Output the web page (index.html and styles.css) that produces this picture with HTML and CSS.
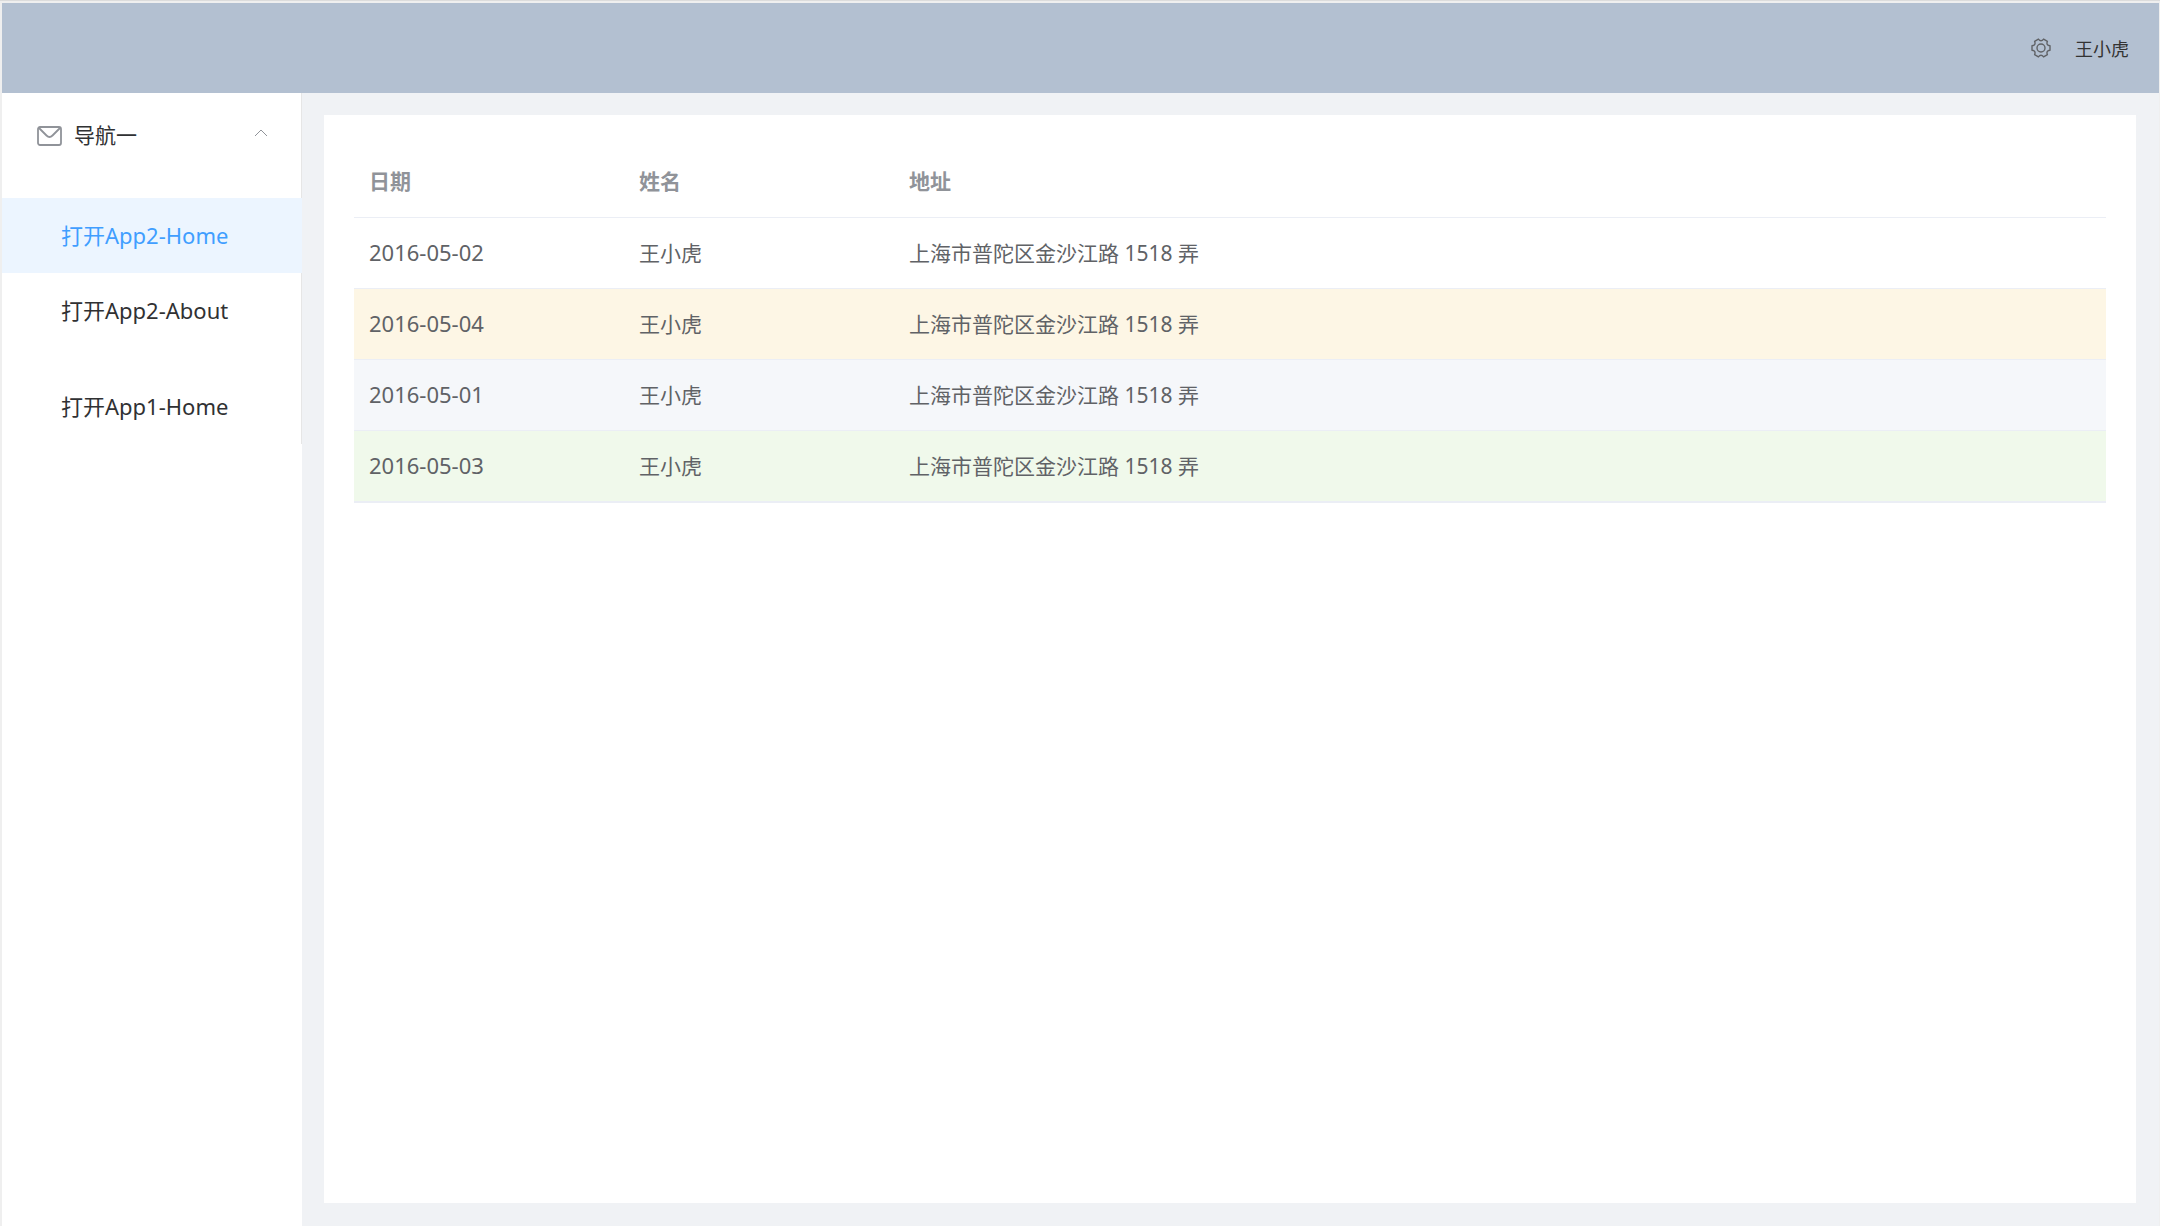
FILE: index.html
```html
<!DOCTYPE html>
<html lang="zh-CN">
<head>
    <meta charset="UTF-8">
    <meta name="viewport" content="width=device-width, initial-scale=1.0">
    <title>App1</title>
    <link rel="stylesheet" href="styles.css">
</head>
<body>
    <header class="header">
        <button type="button" class="setting" aria-label="设置">
            <svg class="icon-setting" viewBox="0 0 20 20">
                <path d="M19 7.8 V12.2 Q14.8 12.7 16.4 16.7 L12.6 18.9 Q10 15.5 7.400 18.900 L3.600 16.700 Q5.200 12.700 1 12.200 V7.800 Q5.200 7.300 3.600 3.300 L7.400 1.100 Q10 4.500 12.600 1.100 L16.400 3.300 Q14.800 7.300 19 7.800 Z"/>
                <circle cx="10" cy="10" r="4"/>
            </svg>
        </button>
        <span class="username">王小虎</span>
    </header>
    <div class="container">
        <aside class="aside">
            <nav class="menu">
                <button type="button" class="submenu-title" aria-expanded="true">
                    <svg class="icon-message" viewBox="0 0 26 20">
                        <rect x="2" y="1" width="23" height="18" rx="2"/>
                        <path d="M3 2 L10.500 9.500 Q13.500 12.500 16.500 9.500 L24 2"/>
                    </svg>
                    <span>导航一</span>
                    <svg class="icon-arrow" viewBox="0 0 14 8">
                        <path d="M1 7 L7 1 L13 7"/>
                    </svg>
                </button>
                <ul class="menu-group">
                    <li><a href="#/app2/home" class="menu-item active">打开App2-Home</a></li>
                    <li><a href="#/app2/about" class="menu-item">打开App2-About</a></li>
                </ul>
                <ul class="menu-group">
                    <li><a href="#/app1/home" class="menu-item">打开App1-Home</a></li>
                </ul>
            </nav>
        </aside>
        <main class="main">
            <div class="content">
                <table class="table">
                    <colgroup>
                        <col class="col-date">
                        <col class="col-name">
                        <col>
                    </colgroup>
                    <thead>
                        <tr>
                            <th>日期</th>
                            <th>姓名</th>
                            <th>地址</th>
                        </tr>
                    </thead>
                    <tbody>
                        <tr>
                            <td class="date">2016-05-02</td>
                            <td>王小虎</td>
                            <td>上海市普陀区金沙江路 1518 弄</td>
                        </tr>
                        <tr class="warning-row">
                            <td class="date">2016-05-04</td>
                            <td>王小虎</td>
                            <td>上海市普陀区金沙江路 1518 弄</td>
                        </tr>
                        <tr class="hover-row">
                            <td class="date">2016-05-01</td>
                            <td>王小虎</td>
                            <td>上海市普陀区金沙江路 1518 弄</td>
                        </tr>
                        <tr class="success-row">
                            <td class="date">2016-05-03</td>
                            <td>王小虎</td>
                            <td>上海市普陀区金沙江路 1518 弄</td>
                        </tr>
                    </tbody>
                </table>
            </div>
        </main>
    </div>
</body>
</html>
```
FILE: styles.css
```css
* {
    box-sizing: border-box;
}

body {
    display: flex;
    flex-direction: column;
    min-height: 100vh;
    margin: 0;
    border-top: 1px solid #dcdcdc;
    padding: 2px 1px 0 2px;
    background-color: #efefef;
    color: #303133;
    font-family: "Noto Sans", "Noto Sans CJK SC", sans-serif;
    font-size: 21px;
}

button {
    border: none;
    padding: 0;
    background: none;
    color: inherit;
    font: inherit;
    cursor: pointer;
}

svg {
    display: block;
    fill: none;
    stroke: #909399;
}

.header {
    display: flex;
    align-items: center;
    justify-content: flex-end;
    gap: 24px;
    height: 90px;
    padding: 0 30px;
    background-color: #b3c0d1;
    color: #333;
    font-size: 18px;
}

.icon-setting {
    width: 20px;
    height: 20px;
    stroke: #606266;
    stroke-width: 1.4;
    stroke-linejoin: round;
}

.container {
    display: flex;
    flex: 1;
}

.aside {
    width: 300px;
    flex-shrink: 0;
    background-color: #fff;
}

.menu {
    border-right: 1px solid #e6e6e6;
}

.submenu-title {
    display: flex;
    align-items: center;
    width: 100%;
    height: 84px;
    padding: 0 33px 2px 34px;
}

.icon-message {
    width: 26px;
    height: 20px;
    margin-top: 4px;
    margin-right: 12px;
    stroke-width: 1.8;
}

.icon-arrow {
    width: 14px;
    height: 8px;
    margin-bottom: 2px;
    margin-left: auto;
}

.menu-group {
    list-style: none;
    margin: 0;
    padding: 21px 0 0;
}

.menu-item {
    display: block;
    padding-left: 59px;
    color: #303133;
    font-size: 22px;
    line-height: 75px;
    text-decoration: none;
}

.menu-item.active {
    margin-right: -1px;
    background-color: #ecf5ff;
    color: #409eff;
}

.main {
    display: flex;
    flex: 1;
    padding: 22px 23px 23px 22px;
    background-color: #f0f2f5;
}

.content {
    flex: 1;
    padding: 30px;
    background-color: #fff;
}

.table {
    width: 100%;
    table-layout: fixed;
    border-collapse: separate;
    border-spacing: 0;
    border-bottom: 1px solid #ebeef5;
    color: #606266;
    text-align: left;
}

.col-date,
.col-name {
    width: 270px;
}

.table th,
.table td {
    height: 71px;
    padding: 0 15px 3px;
    border-bottom: 1px solid #ebeef5;
}

.table th {
    height: 73px;
    color: #909399;
}

.table .date {
    font-size: 22px;
}

.warning-row {
    background-color: #fdf6e5;
}

.hover-row {
    background-color: #f5f7fa;
}

.success-row {
    background-color: #f0f9eb;
}
```
